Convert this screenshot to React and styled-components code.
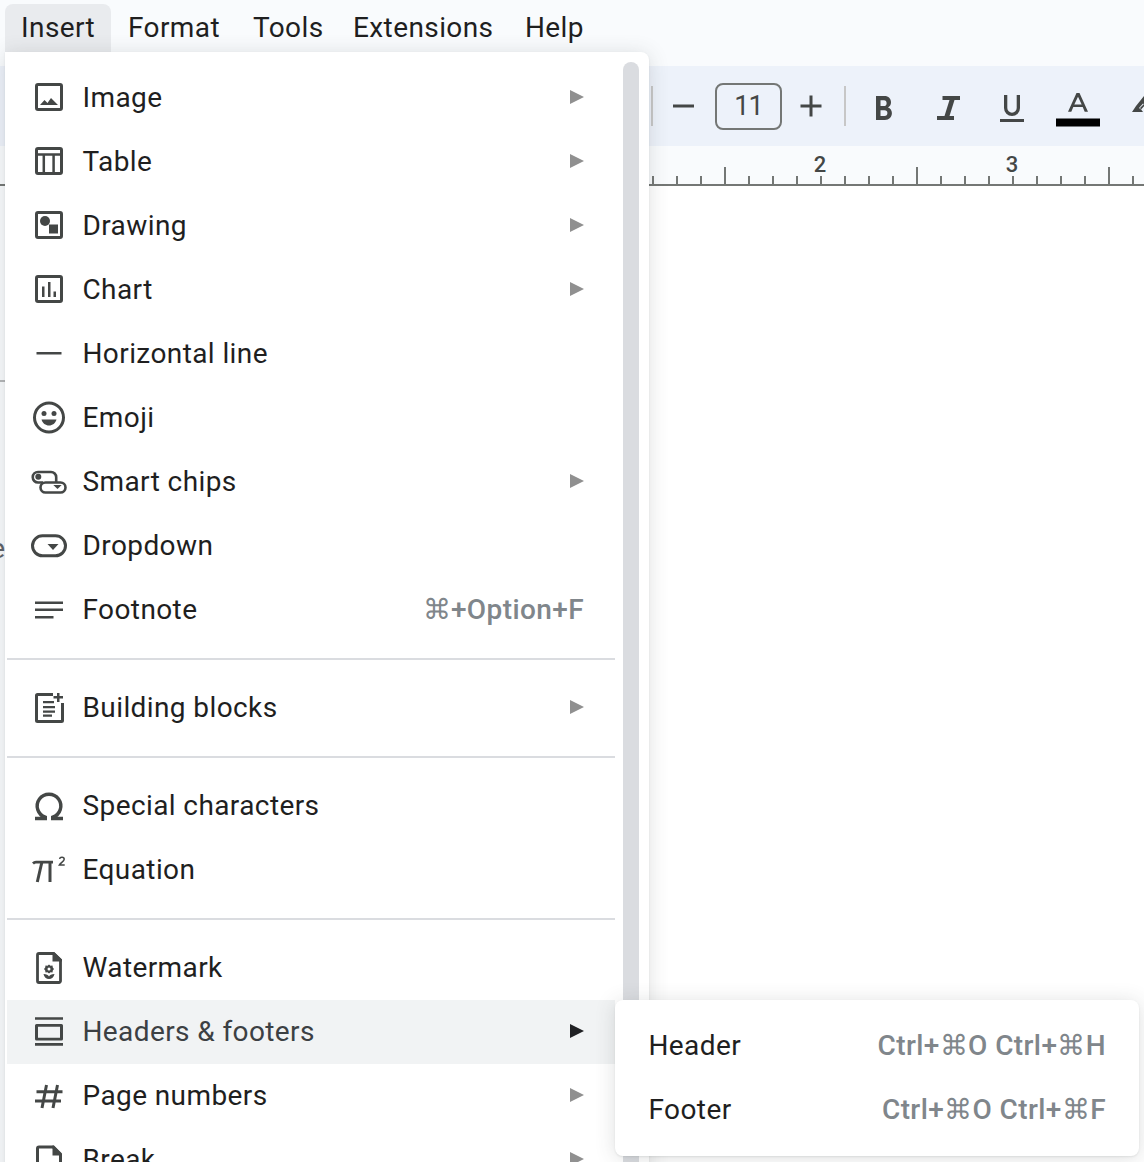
import React from "react";
import styled, { createGlobalStyle } from "styled-components";

const Global = createGlobalStyle`
  html, body { margin: 0; padding: 0; background: #fff; overflow: hidden; }
  body { font-family: Roboto, "Liberation Sans", sans-serif; color: #1f1f1f; }
`;

const Page = styled.div`
  position: relative;
  width: 1144px;
  height: 1162px;
  overflow: hidden;
  display: flex;
  flex-direction: column;
  background: #fff;
`;
const MenuBar = styled.div`
  height: 66px;
  box-sizing: border-box;
  padding: 4px 0 0 5px;
  background: #f9fbfd;
  display: flex;
  align-items: flex-start;
  gap: 1px;
  flex: none;
`;
const MenuTitle = styled.div`
  width: ${(p) => p.$w}px;
  height: 48px;
  box-sizing: border-box;
  padding: 0 0 2px 16px;
  display: flex;
  align-items: center;
  font-size: 28px;
  letter-spacing: 0.4px;
  border-radius: 8px 8px 0 0;
  background: ${(p) => (p.$open ? "#e9ebee" : "transparent")};
  color: #1f1f1f;
`;
const Toolbar = styled.div`
  height: 80px;
  flex: none;
  background: #edf2fa;
  display: flex;
  align-items: center;
  padding-left: 651px;
  color: #444746;
`;
const ToolSep = styled.div`
  width: 2px;
  height: 40px;
  background: #c7c7c7;
  flex: none;
  margin-left: ${(p) => p.$left || 0}px;
`;
const ToolIcon = styled.svg`
  width: 44px;
  height: 44px;
  flex: none;
  margin-left: ${(p) => p.$left || 0}px;
`;
const SizeBox = styled.div`
  width: 67px;
  height: 47px;
  box-sizing: border-box;
  border: 2px solid #747775;
  border-radius: 8px;
  display: flex;
  align-items: center;
  justify-content: center;
  font-size: 27px;
  letter-spacing: -1px;
  color: #444746;
  margin-left: 9px;
  flex: none;
`;
const Ruler = styled.div`
  height: 40px;
  flex: none;
  background: #f9fbfd;
`;
const RulerSvg = styled.svg`
  display: block;
  width: 1144px;
  height: 40px;
`;
const Work = styled.div`
  flex: 1;
  display: flex;
  min-height: 0;
`;
const Side = styled.div`
  width: 5px;
  box-sizing: border-box;
  padding-top: 194px;
  background: #f9fbfd;
  flex: none;
  overflow: hidden;
  display: flex;
  flex-direction: column;
`;
const SideRule = styled.div`
  height: 2px;
  background: #b4b6b8;
  flex: none;
`;
const SideText = styled.div`
  margin-top: 143px;
  display: flex;
  justify-content: flex-end;
  font-size: 28px;
  line-height: 48px;
  color: #5f6368;
`;
const Doc = styled.div`
  flex: 1;
  background: #fff;
`;

const shadow = "0 1px 2px rgba(60, 64, 67, 0.1), 0 2px 20px rgba(60, 64, 67, 0.17)";

const Menu = styled.div`
  position: absolute;
  left: 5px;
  top: 52px;
  width: 644px;
  height: 1140px;
  box-sizing: border-box;
  padding: 13px 34px 0 2px;
  background: #fff;
  border-radius: 0 8px 8px 8px;
  box-shadow: ${shadow};
`;
const Scrollbar = styled.div`
  position: absolute;
  left: 618px;
  top: 10px;
  width: 16px;
  bottom: 0;
  border-radius: 8px 8px 0 0;
  background: #dadce0;
`;
const Row = styled.div`
  height: 64px;
  display: flex;
  align-items: center;
  background: ${(p) => (p.$active ? "linear-gradient(transparent 1px, #f1f3f4 1px)" : "transparent")};
  box-shadow: ${(p) => (p.$active ? "0 1px 0 #f1f3f4" : "none")};
  padding-right: 31px;
`;
const IconSlot = styled.svg`
  width: 36px;
  height: 36px;
  margin-left: 24px;
  flex: none;
  color: #444746;
`;
const Label = styled.span`
  margin-left: 15.5px;
  font-size: 28px;
  letter-spacing: 0.4px;
  color: ${(p) => (p.$active ? "#3c4043" : "#1f1f1f")};
  flex: 1;
  white-space: nowrap;
`;
const Arrow = styled.svg`
  width: 14px;
  height: 14px;
  flex: none;
  color: ${(p) => (p.$active ? "#202124" : "#909090")};
`;
const Shortcut = styled.span`
  font-size: 28px;
  font-weight: 500;
  letter-spacing: 0.4px;
  color: #80868b;
  white-space: nowrap;
`;
const Sep = styled.div`
  height: 2px;
  background: #dadce0;
  margin: 17px 0 15px;
`;
const SubMenu = styled.div`
  position: absolute;
  left: 615px;
  top: 1000px;
  width: 524px;
  height: 156px;
  box-sizing: border-box;
  padding: 13px 33px 0 33.5px;
  background: #fff;
  border-radius: 8px;
  box-shadow: ${shadow};
`;
const SubRow = styled.div`
  height: 64px;
  display: flex;
  align-items: center;
  justify-content: space-between;
`;
const SubLabel = styled.span`
  font-size: 28px;
  letter-spacing: 0.4px;
  color: #1f1f1f;
`;

const F = "currentColor";
const Box = () => <rect x="5.5" y="5.5" width="25" height="25" rx="1.5" fill="none" stroke={F} strokeWidth="3" />;

const icons = {
  image: (<><Box /><path d="M9 26l4.500-5 3 3 3.500-5 7 7z" fill={F} /></>),
  table: (<><Box /><path d="M5 11.500h26M12.800 11.500V31M22.600 11.500V31" fill="none" stroke={F} strokeWidth="2.500" /></>),
  drawing: (<><Box /><circle cx="14" cy="14" r="5" fill={F} /><rect x="18" y="17.500" width="9" height="9" fill={F} /></>),
  chart: (<><Box /><path d="M11 15.500h2.500V26H11zM17 11h2.500v15H17zM22.500 20.500H25V26h-2.500z" fill={F} /></>),
  line: (<rect x="5.500" y="17" width="25" height="2.500" fill={F} />),
  emoji: (<><circle cx="18" cy="18.500" r="14.500" fill="none" stroke={F} strokeWidth="3" /><circle cx="13" cy="14.500" r="2.500" fill={F} /><circle cx="23" cy="14.500" r="2.500" fill={F} /><path d="M10.500 20.500h15c-1 3.800-4 6-7.500 6s-6.500-2.200-7.500-6z" fill={F} /></>),
  chips: (<><path d="M12 19.500H7a5.200 5.200 0 0 1 0-10.500H20a5.200 5.200 0 0 1 5.200 5.200V19" fill="none" stroke={F} strokeWidth="2.600" /><rect x="9.500" y="19.500" width="25" height="10" rx="5" fill="#fff" stroke={F} strokeWidth="2.600" /><circle cx="7.300" cy="13.800" r="3" fill={F} /><path d="M22.300 22h8.400l-4.200 4z" fill={F} /></>),
  dropdown: (<><rect x="1.500" y="8.800" width="33" height="20" rx="10" fill="none" stroke={F} strokeWidth="3" /><path d="M16.500 17h11l-5.500 6z" fill={F} /></>),
  footnote: (<path d="M4 10.500h28v2.500H4zM4 17.500h28V20H4zM4 25h18.500v2.500H4z" fill={F} />),
  blocks: (<><path d="M22 5.500H6.500a1 1 0 0 0-1 1v25a1 1 0 0 0 1 1H30.500a1 1 0 0 0 1-1V14" fill="none" stroke={F} strokeWidth="3" /><path d="M12 12h11v2.200H12zM12 17h12v2.200H12zM12 21.500h12v2.200H12zM12 25.500h9v2.200h-9z" fill={F} /><path d="M26 4h2.500v3H32v2.500h-3.500V13H26V9.500h-3.500V7H26z" fill={F} /></>),
  omega: (<path d="M4 31.500H14.300V30.200A11.800 11.800 0 1 1 21.700 30.200V31.500H32" fill="none" stroke={F} strokeWidth="3.400" />),
  pi: (<><path d="M2 12.500c1-1 2-1.300 3-1.300H22" fill="none" stroke={F} strokeWidth="2.800" /><path d="M10.800 11.500 L6.300 31" fill="none" stroke={F} strokeWidth="3" /><path d="M19 11.500V31" fill="none" stroke={F} strokeWidth="3" /><path d="M28.600 8c.3-2.300 4.600-2.300 4.600.3 0 2-3.600 3.400-4.900 5.700h5.400" fill="none" stroke={F} strokeWidth="1.500" /></>),
  watermark: (<><path d="M22.500 4.500H8a1.500 1.500 0 0 0-1.500 1.500v26A1.500 1.500 0 0 0 8 33.500H28a1.500 1.500 0 0 0 1.500-1.500V11z" fill="none" stroke={F} strokeWidth="2.800" /><path d="M21.500 3.300h2L31 10.500v2h-9.500z" fill={F} /><path d="M18 15.500l1.500 1.300 2-.3.3 2 1.200 1.500-1.200 1.500-.3 2-2 -.3-1.500 1.300-1.500-1.300-2 .3-.3-2L13 20l1.200-1.500.3-2 2 .3z" fill={F} /><circle cx="18" cy="20" r="1.500" fill="#fff" /><path d="M12.500 25c3 0 4.800 1 5.500 2.600.7-1.600 2.500-2.600 5.500-2.600-.5 3-2.800 5-5.500 5s-5-2-5.500-5z" fill={F} /></>),
  headers: (<path fillRule="evenodd" d="M4 4.200h28v2.600H4zM4 30h28v2.800H4zM5.500 11h25a1.500 1.500 0 0 1 1.500 1.500v13.500a1.500 1.500 0 0 1-1.500 1.500h-25A1.500 1.500 0 0 1 4 26V12.500A1.500 1.500 0 0 1 5.500 11zM7 13.800V24.700H29V13.800z" fill={F} />),
  hash: (<path d="M15.500 8 11 31M26.500 8 22 31M5.500 14.700H31.500M4 24H30" fill="none" stroke={F} strokeWidth="3" />),
  breakIcon: (<><path d="M6.500 34V7.500A1.500 1.500 0 0 1 8 6H22L29.500 13.500V34" fill="none" stroke={F} strokeWidth="3" /><path d="M21.500 4.500h1.500L31 12.500v2h-9.500z" fill={F} /></>),
};

const Tri = ({ active }) => (
  <Arrow $active={active} viewBox="0 0 14 14"><path d="M0 0 14 7 0 14z" fill="currentColor" /></Arrow>
);

const Item = ({ icon, label, sub, shortcut, active }) => (
  <Row $active={active}>
    <IconSlot viewBox="0 0 36 36">{icons[icon]}</IconSlot>
    <Label $active={active}>{label}</Label>
    {sub && <Tri active={active} />}
    {shortcut && <Shortcut>{shortcut}</Shortcut>}
  </Row>
);

const rulerTicks = [];
for (let x = 652; x <= 1144; x += 24) {
  const k = Math.round((x - 724) / 24);
  const major = ((k % 8) + 8) % 8 === 0;
  rulerTicks.push(<rect key={x} x={x} y={major ? 21 : 30} width="2" height={major ? 17 : 8} fill="#747775" />);
}

export default function App() {
  return (
    <Page>
      <Global />
      <MenuBar>
        <MenuTitle $open $w={106}>Insert</MenuTitle>
        <MenuTitle $w={124}>Format</MenuTitle>
        <MenuTitle $w={99}>Tools</MenuTitle>
        <MenuTitle $w={171}>Extensions</MenuTitle>
        <MenuTitle $w={90}>Help</MenuTitle>
      </MenuBar>
      <Toolbar>
        <ToolSep />
        <ToolIcon $left={9} viewBox="0 0 44 44"><rect x="11" y="20.500" width="21" height="3" fill="#444746" /></ToolIcon>
        <SizeBox>11</SizeBox>
        <ToolIcon $left={7} viewBox="0 0 44 44"><path d="M20.500 11.500h3v9h9v3h-9v9h-3v-9h-9v-3h9z" fill="#444746" /></ToolIcon>
        <ToolSep $left={11} />
        <ToolIcon $left={15} viewBox="0 0 44 44"><path transform="scale(1 1.09)" fillRule="evenodd" d="M15 11h8.500c4 0 6.500 2.300 6.500 5.800 0 2.300-1.200 3.800-3 4.700 2.300.8 3.900 2.600 3.900 5.200 0 3.800-2.800 6.300-7 6.300H15zM19.500 15v5.200h3.500c1.700 0 2.600-1 2.600-2.600S24.700 15 23 15zM19.500 24v5.300h4c1.900 0 2.900-1 2.900-2.700S25.400 24 23.500 24z" fill="#444746" /></ToolIcon>
        <ToolIcon $left={22} viewBox="0 0 44 44"><path d="M15.500 12H33V16H27.500L22.500 32H27V36H10V32H17.500L22.500 16H15.500z" fill="#444746" /></ToolIcon>
        <ToolIcon $left={19} viewBox="0 0 44 44"><path transform="translate(0 1)" d="M14 10v13a8 8 0 0 0 16 0V10h-3.300v13a4.700 4.700 0 0 1-9.400 0V10zM10 34h24v3H10z" fill="#444746" /></ToolIcon>
        <ToolIcon $left={22} viewBox="0 0 44 44"><path transform="translate(0 1) scale(1 .89)" fillRule="evenodd" d="M20.500 9h3l8.500 21h-3.300l-2-5.300h-9.400l-2 5.300h-3.300zM22 13.200l-3.700 8.700h7.400z" fill="#444746" /><rect x="0" y="34.500" width="44" height="8" fill="#000" /></ToolIcon>
        <ToolIcon $left={10} viewBox="0 0 44 44"><path fillRule="evenodd" d="M22 28l4-6 8-10h10v5h-7l-7 7 3 4zM29 24l2 1.500 4-4.500-2-1.500z" fill="#444746" /></ToolIcon>
      </Toolbar>
      <Ruler>
        <RulerSvg viewBox="0 0 1144 40">
          <rect x="0" y="38" width="1144" height="2" fill="#747775" />
          {rulerTicks}
          <text x="820" y="26" textAnchor="middle" fontSize="22" fontWeight="500" fontFamily="Roboto, sans-serif" fill="#444746">2</text>
          <text x="1012" y="26" textAnchor="middle" fontSize="22" fontWeight="500" fontFamily="Roboto, sans-serif" fill="#444746">3</text>
        </RulerSvg>
      </Ruler>
      <Work>
        <Side>
          <SideRule />
          <SideText>e</SideText>
        </Side>
        <Doc />
      </Work>
      <Menu>
        <Item icon="image" label="Image" sub />
        <Item icon="table" label="Table" sub />
        <Item icon="drawing" label="Drawing" sub />
        <Item icon="chart" label="Chart" sub />
        <Item icon="line" label="Horizontal line" />
        <Item icon="emoji" label="Emoji" />
        <Item icon="chips" label="Smart chips" sub />
        <Item icon="dropdown" label="Dropdown" />
        <Item icon="footnote" label="Footnote" shortcut="⌘+Option+F" />
        <Sep />
        <Item icon="blocks" label="Building blocks" sub />
        <Sep />
        <Item icon="omega" label="Special characters" />
        <Item icon="pi" label="Equation" />
        <Sep />
        <Item icon="watermark" label="Watermark" />
        <Item icon="headers" label="Headers & footers" sub active />
        <Item icon="hash" label="Page numbers" sub />
        <Item icon="breakIcon" label="Break" sub />
        <Scrollbar />
      </Menu>
      <SubMenu>
        <SubRow><SubLabel>Header</SubLabel><Shortcut>Ctrl+⌘O Ctrl+⌘H</Shortcut></SubRow>
        <SubRow><SubLabel>Footer</SubLabel><Shortcut>Ctrl+⌘O Ctrl+⌘F</Shortcut></SubRow>
      </SubMenu>
    </Page>
  );
}
